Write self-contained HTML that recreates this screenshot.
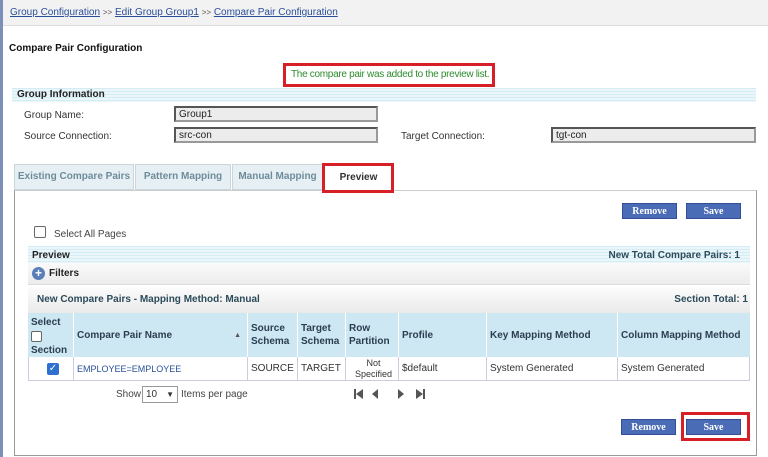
<!DOCTYPE html>
<html><head><meta charset="utf-8"><style>
*{margin:0;padding:0;box-sizing:border-box}
body{width:768px;height:457px;overflow:hidden;background:#fff;font-family:"Liberation Sans",sans-serif;font-size:10px;color:#333;position:relative}
.a{position:absolute;white-space:nowrap}
a{color:#2a4f9a;text-decoration:underline}
.b{font-weight:bold}
.inp{position:absolute;height:16px;background:#ececec;border:2px solid #555;border-right-color:#999;border-bottom-color:#999;padding-left:3px;font-size:10px;line-height:13px;color:#222}
.band{position:absolute;background:repeating-linear-gradient(#d4ecf4 0 1px,#eaf6fa 1px 3px);}
.btn{position:absolute;height:16px;background:#4a6bb5;color:#fff;font-weight:bold;font-size:10px;text-align:center;line-height:15px;border:1px solid #324f94;font-family:"Liberation Serif",serif}
.red{position:absolute;border:3px solid #d71f27}
.tab{position:absolute;top:164px;height:26px;background:#e6f0f4;border:1px solid #c9d6dc;color:#6e8b9a;font-weight:bold;font-size:10px;line-height:24px;text-align:center;white-space:nowrap}
.th{position:absolute;top:313px;height:44px;border-right:1px solid #fff;font-weight:bold;color:#2b3e50;font-size:10px;line-height:13px;display:flex;align-items:center;padding-left:3px;white-space:nowrap}
.td{position:absolute;top:357px;height:24px;border-right:1px solid #ccd;font-size:10px;line-height:24px;padding-left:3px;white-space:nowrap}
.cb{position:absolute;width:11px;height:11px;border:1px solid #666;border-radius:2px;background:#fff}
</style></head><body>
<div class="a" style="left:0;top:0;width:768px;height:26px;background:#f2f2f2;border-bottom:1px solid #ddd"></div>
<div class="a" style="left:0;top:0;width:3px;height:457px;background:#7b8fb8"></div>
<div class="a" style="left:10px;top:7px;font-size:10px"><a>Group Configuration</a> <span style="color:#555;font-size:8px">&gt;&gt;</span> <a>Edit Group Group1</a> <span style="color:#555;font-size:8px">&gt;&gt;</span> <a>Compare Pair Configuration</a></div>
<div class="a b" style="left:9px;top:43px;color:#111">Compare Pair Configuration</div>
<div class="red" style="left:283px;top:63px;width:212px;height:24px"></div>
<div class="a" style="left:291px;top:69px;color:#2e8b2e;letter-spacing:-0.3px">The compare pair was added to the preview list.</div>
<div class="band" style="left:12px;top:88px;width:744px;height:14px"></div>
<div class="a b" style="left:17px;top:89px;color:#222">Group Information</div>
<div class="a" style="left:24px;top:110px">Group Name:</div>
<div class="inp" style="left:174px;top:106px;width:204px">Group1</div>
<div class="a" style="left:24px;top:131px">Source Connection:</div>
<div class="inp" style="left:174px;top:127px;width:204px">src-con</div>
<div class="a" style="left:401px;top:131px">Target Connection:</div>
<div class="inp" style="left:551px;top:127px;width:205px">tgt-con</div>
<div class="tab" style="left:14px;width:120px">Existing Compare Pairs</div>
<div class="tab" style="left:135px;width:96px">Pattern Mapping</div>
<div class="tab" style="left:232px;width:91px">Manual Mapping</div>
<div class="a" style="left:14px;top:190px;width:743px;height:266px;border:1px solid #999;border-top-color:#ccc"></div>
<div class="a" style="left:326px;top:166px;width:65px;height:26px;background:#fff;font-weight:bold;color:#333;text-align:center;line-height:24px">Preview</div>
<div class="red" style="left:322px;top:163px;width:72px;height:30px"></div>
<div class="btn" style="left:622px;top:203px;width:55px">Remove</div>
<div class="btn" style="left:686px;top:203px;width:55px">Save</div>
<div class="cb" style="left:34px;top:226px;width:12px;height:12px"></div>
<div class="a" style="left:54px;top:229px;color:#444">Select All Pages</div>
<div class="band" style="left:28px;top:246px;width:722px;height:17px"></div>
<div class="a b" style="left:32px;top:250px;color:#222">Preview</div>
<div class="a b" style="right:28px;top:250px;color:#2b4a5a">New Total Compare Pairs: 1</div>
<div class="a" style="left:28px;top:263px;width:722px;height:22px;background:linear-gradient(#fafafa,#ececec);border-bottom:1px solid #ddd"></div>
<div class="a" style="left:32px;top:267px;width:13px;height:13px;border-radius:50%;background:#5a7fb8;color:#fff;font-weight:bold;font-size:12px;line-height:12px;text-align:center">+</div>
<div class="a b" style="left:49px;top:268px;color:#222">Filters</div>
<div class="a" style="left:28px;top:287px;width:722px;height:26px;background:linear-gradient(#fcfcfc,#eaeaea)"></div>
<div class="a b" style="left:37px;top:294px;color:#2b4a5a">New Compare Pairs - Mapping Method: Manual</div>
<div class="a b" style="right:20px;top:294px;color:#2b4a5a">Section Total: 1</div>
<div class="a" style="left:28px;top:313px;width:722px;height:68px;background:#fff;border:1px solid #ccd"></div>
<div class="a" style="left:28px;top:313px;width:722px;height:44px;background:#cde7f3"></div>
<div class="th" style="left:28px;width:46px;display:block;padding-top:3px">Select<br><span class="cb" style="position:relative;display:inline-block;top:2px"></span><br>Section</div>
<div class="th" style="left:74px;width:174px">Compare Pair Name<span style="position:absolute;right:6px;font-size:7px;color:#555">▲</span></div>
<div class="th" style="left:248px;width:50px">Source<br>Schema</div>
<div class="th" style="left:298px;width:48px">Target<br>Schema</div>
<div class="th" style="left:346px;width:53px">Row<br>Partition</div>
<div class="th" style="left:399px;width:88px">Profile</div>
<div class="th" style="left:487px;width:131px">Key Mapping Method</div>
<div class="th" style="left:618px;width:132px;border-right:0">Column Mapping Method</div>
<div class="td" style="left:28px;width:46px"></div>
<div class="a" style="left:47px;top:363px;width:12px;height:12px;background:#2f6fd0;border-radius:2px;color:#fff;font-size:10px;line-height:12px;text-align:center">✓</div>
<div class="td" style="left:74px;width:174px;color:#2a4f9a;font-size:9px">EMPLOYEE=EMPLOYEE</div>
<div class="td" style="left:248px;width:50px">SOURCE</div>
<div class="td" style="left:298px;width:48px">TARGET</div>
<div class="td" style="left:346px;width:53px;line-height:11px;text-align:center;padding-top:1px;font-size:9px">Not<br>Specified</div>
<div class="td" style="left:399px;width:88px">$default</div>
<div class="td" style="left:487px;width:131px">System Generated</div>
<div class="td" style="left:618px;width:132px;border-right:0">System Generated</div>
<div class="a" style="left:116px;top:389px;color:#444">Show</div>
<div class="a" style="left:142px;top:386px;width:36px;height:17px;border:1px solid #999;padding-left:3px;line-height:15px">10 <span style="position:absolute;right:3px;font-size:8px">▼</span></div>
<div class="a" style="left:181px;top:389px;color:#444">Items per page</div>
<svg class="a" style="left:352px;top:387px" width="76" height="14" viewBox="0 0 76 14" fill="#555">
<rect x="2" y="2" width="2" height="10"/><path d="M11 2V12L4 7Z"/>
<path d="M26 2V12L20 7Z"/>
<path d="M46 2V12L52 7Z"/>
<path d="M64 2V12L71 7Z"/><rect x="71" y="2" width="2" height="10"/>
</svg>
<div class="btn" style="left:621px;top:419px;width:55px">Remove</div>
<div class="btn" style="left:686px;top:419px;width:55px">Save</div>
<div class="red" style="left:681px;top:412px;width:69px;height:29px"></div>
</body></html>
